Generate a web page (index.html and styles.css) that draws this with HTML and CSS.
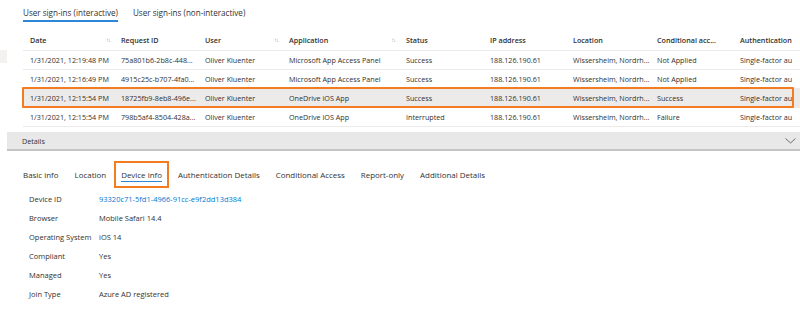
FILE: index.html
```html
<!DOCTYPE html>
<html>
<head>
<meta charset="utf-8">
<link rel="stylesheet" href="styles.css">
</head>
<body>
<div class="page">
  <nav class="top-tabs">
    <span class="top-tab active">User sign-ins (interactive)</span>
    <span class="top-tab">User sign-ins (non-interactive)</span>
  </nav>
  <div class="main">
    <div class="gutter"><div class="chip"></div></div>
    <div class="table">
      <div class="row head">
        <div class="cell">Date<span class="sort">↑↓</span></div>
        <div class="cell">Request ID</div>
        <div class="cell">User<span class="sort">↑↓</span></div>
        <div class="cell">Application<span class="sort">↑↓</span></div>
        <div class="cell">Status</div>
        <div class="cell">IP address</div>
        <div class="cell">Location</div>
        <div class="cell">Conditional acc...</div>
        <div class="cell">Authentication</div>
      </div>
      <div class="row">
        <div class="cell">1/31/2021, 12:19:48 PM</div>
        <div class="cell">75a801b6-2b8c-448...</div>
        <div class="cell">Oliver Kluenter</div>
        <div class="cell">Microsoft App Access Panel</div>
        <div class="cell">Success</div>
        <div class="cell">188.126.190.61</div>
        <div class="cell">Wissersheim, Nordrh...</div>
        <div class="cell">Not Applied</div>
        <div class="cell">Single-factor au</div>
      </div>
      <div class="row">
        <div class="cell">1/31/2021, 12:16:49 PM</div>
        <div class="cell">4915c25c-b707-4fa0...</div>
        <div class="cell">Oliver Kluenter</div>
        <div class="cell">Microsoft App Access Panel</div>
        <div class="cell">Success</div>
        <div class="cell">188.126.190.61</div>
        <div class="cell">Wissersheim, Nordrh...</div>
        <div class="cell">Not Applied</div>
        <div class="cell">Single-factor au</div>
      </div>
      <div class="row selected">
        <div class="cell">1/31/2021, 12:15:54 PM</div>
        <div class="cell">18725fb9-8eb8-496e...</div>
        <div class="cell">Oliver Kluenter</div>
        <div class="cell">OneDrive iOS App</div>
        <div class="cell">Success</div>
        <div class="cell">188.126.190.61</div>
        <div class="cell">Wissersheim, Nordrh...</div>
        <div class="cell">Success</div>
        <div class="cell">Single-factor au</div>
      </div>
      <div class="row">
        <div class="cell">1/31/2021, 12:15:54 PM</div>
        <div class="cell">798b5af4-8504-428a...</div>
        <div class="cell">Oliver Kluenter</div>
        <div class="cell">OneDrive iOS App</div>
        <div class="cell">Interrupted</div>
        <div class="cell">188.126.190.61</div>
        <div class="cell">Wissersheim, Nordrh...</div>
        <div class="cell">Failure</div>
        <div class="cell">Single-factor au</div>
      </div>
    </div>
  </div>
  <div class="details-bar">
    <span>Details</span>
    <svg class="chevron" width="11" height="6" viewBox="0 0 11 6"><path d="M0.5 0.5 L5.5 5 L10.5 0.5" fill="none" stroke="#605e5c" stroke-width="0.9"/></svg>
  </div>
  <nav class="detail-tabs">
    <span class="dtab">Basic info</span>
    <span class="dtab">Location</span>
    <span class="dtab active"><span class="dtab-label">Device info</span></span>
    <span class="dtab">Authentication Details</span>
    <span class="dtab">Conditional Access</span>
    <span class="dtab">Report-only</span>
    <span class="dtab">Additional Details</span>
  </nav>
  <dl class="props">
    <div class="prop"><dt>Device ID</dt><dd class="link">93320c71-5fd1-4966-91cc-e9f2dd13d384</dd></div>
    <div class="prop"><dt>Browser</dt><dd>Mobile Safari 14.4</dd></div>
    <div class="prop"><dt>Operating System</dt><dd>iOS 14</dd></div>
    <div class="prop"><dt>Compliant</dt><dd>Yes</dd></div>
    <div class="prop"><dt>Managed</dt><dd>Yes</dd></div>
    <div class="prop"><dt>Join Type</dt><dd>Azure AD registered</dd></div>
  </dl>
</div>
</body>
</html>
```
FILE: styles.css
```css
html, body {
  margin: 0;
  padding: 0;
  background: #ffffff;
}
.page {
  width: 800px;
  height: 329px;
  overflow: hidden;
  font-family: "Open Sans", "Noto Sans", sans-serif;
  font-size: 7.2px;
  color: #323130;
}
.top-tabs {
  display: flex;
  gap: 15px;
  padding-left: 23px;
  height: 22px;
  align-items: flex-end;
}
.top-tab {
  height: 14px;
  line-height: 10px;
  font-size: 8.1px;
  box-sizing: border-box;
}
.top-tab.active {
  border-bottom: 2px solid #2b88d8;
}
.main {
  display: flex;
  margin-top: 8px;
}
.gutter {
  width: 23px;
  flex: none;
}
.chip {
  width: 7px;
  height: 13px;
  margin-top: 20px;
  background: #f3f2f1;
}
.table {
  width: 777px;
  flex: none;
}
.row {
  display: grid;
  grid-template-columns: 91px 84px 84px 117px 84px 83px 84px 83px 67px;
  height: 19px;
  box-sizing: border-box;
  border-bottom: 1px solid #edebe9;
  align-items: center;
  position: relative;
  white-space: nowrap;
}
.row.head {
  height: 21px;
  font-weight: 600;
}
.cell {
  padding-left: 7px;
  overflow: hidden;
  display: flex;
  align-items: center;
}
.sort {
  margin-left: auto;
  margin-right: 4px;
  color: #a19f9d;
  font-weight: 400;
  font-size: 6px;
  letter-spacing: -1px;
}
.row.selected {
  background: #edebe9;
}
.row.selected::after {
  content: "";
  position: absolute;
  left: -1px;
  right: 6px;
  top: -2px;
  bottom: -1px;
  border: 2px solid #f47c20;
  border-radius: 1px;
}
.details-bar {
  margin: 5px 0 0 7px;
  height: 17px;
  background: #e8e8e8;
  border-bottom: 2px solid #c4c4c4;
  display: flex;
  align-items: center;
  justify-content: space-between;
  padding: 0 4px 0 15px;
}
.chevron {
  display: block;
}
.detail-tabs {
  display: flex;
  align-items: center;
  padding-left: 15px;
  margin-top: 10px;
  height: 27px;
  font-size: 7.95px;
}
.dtab {
  padding: 0 8px;
  line-height: 10px;
}
.dtab.active {
  align-self: stretch;
  display: flex;
  align-items: center;
  border: 2px solid #f47c20;
  box-sizing: border-box;
  padding: 0 5px;
  margin: 0 1px 0 0;
}
.dtab-label {
  border-bottom: 1.5px solid #2b88d8;
  padding-top: 2px;
  padding-bottom: 1px;
  margin-top: 1px;
}
.props {
  margin: 1px 0 0 29px;
  padding: 0;
  font-size: 7.5px;
}
.prop {
  display: flex;
  height: 19px;
  align-items: center;
}
.prop dt {
  width: 70px;
  flex: none;
}
.prop dd {
  margin: 0;
}
.prop dd.link {
  color: #0078d4;
}
```
